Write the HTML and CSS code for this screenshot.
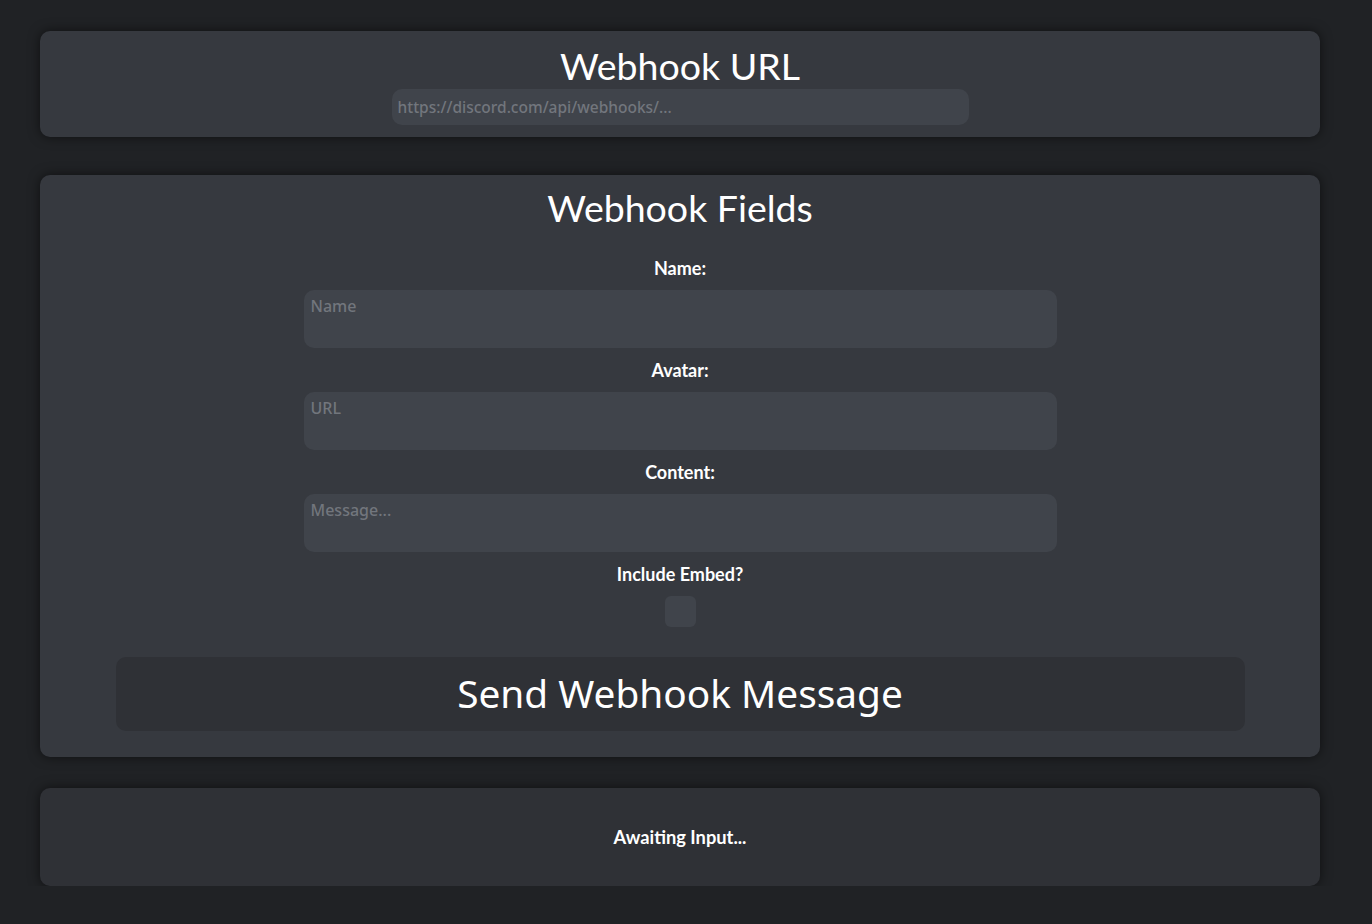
FILE: index.html
```html
<!DOCTYPE html>
<html>
<head>
<meta charset="utf-8">
<link rel="stylesheet" href="styles.css">
</head>
<body>
<div class="page">
  <section class="card card-url">
    <h1 class="title">Webhook URL</h1>
    <input class="url-input" type="text" placeholder="https://discord.com/api/webhooks/...">
  </section>
  <section class="card card-fields">
    <h1 class="title">Webhook Fields</h1>
    <label class="label">Name:</label>
    <textarea class="field" placeholder="Name"></textarea>
    <label class="label">Avatar:</label>
    <textarea class="field" placeholder="URL"></textarea>
    <label class="label">Content:</label>
    <textarea class="field" placeholder="Message..."></textarea>
    <label class="label">Include Embed?</label>
    <span class="checkbox"></span>
    <button class="send">Send Webhook Message</button>
  </section>
  <section class="card card-status">
    <p class="status">Awaiting Input...</p>
  </section>
</div>
</body>
</html>
```
FILE: styles.css
```css
html, body {
  margin: 0;
  padding: 0;
  background: #202225;
}
body {
  font-family: "Lato", "Noto Sans", sans-serif;
  color: #ffffff;
}
.page {
  display: flex;
  flex-direction: column;
  padding: 31px 0 0 40px;
  width: 1280px;
}
.card {
  background: #36393f;
  border-radius: 10px;
  box-shadow: 0 0 12px rgba(0, 0, 0, 0.55);
  display: flex;
  flex-direction: column;
  align-items: center;
  box-sizing: border-box;
}
.title {
  margin: 0;
  font-weight: 400;
  font-size: 37.5px;
  line-height: 46px;
  color: #ffffff;
}
.card-url {
  height: 106px;
  padding-top: 12px;
}
.url-input {
  box-sizing: border-box;
  width: 577px;
  height: 36px;
  margin-top: 0;
  border: none;
  outline: none;
  border-radius: 10px;
  background: #40444b;
  padding: 0 6px;
  font-family: "Noto Sans", sans-serif;
  font-size: 15.5px;
  color: #dcddde;
}
.url-input::placeholder, .field::placeholder {
  color: #72767d;
  font-weight: 500;
}
.card-fields {
  margin-top: 38px;
  height: 582px;
  padding-top: 10px;
}
.card-fields .title {
  margin-bottom: 27px;
}
.label {
  font-weight: 700;
  font-size: 18px;
  line-height: 22px;
  color: #ffffff;
  margin-top: -1px;
  margin-bottom: 1px;
}
.field {
  box-sizing: border-box;
  display: block;
  width: 753px;
  height: 58px;
  margin: 10px 0 12px;
  border: none;
  outline: none;
  resize: none;
  border-radius: 10px;
  background: #40444b;
  padding: 6px 7px;
  font-family: "Noto Sans", sans-serif;
  font-size: 16px;
  line-height: 20px;
  color: #dcddde;
}
.checkbox {
  display: block;
  width: 31px;
  height: 31px;
  margin-top: 10px;
  border-radius: 6px;
  background: #40444b;
}
.send {
  margin-top: 30px;
  width: 1129px;
  height: 74px;
  border: none;
  border-radius: 10px;
  background: #2f3136;
  color: #ffffff;
  font-family: "Noto Sans", sans-serif;
  font-size: 38.8px;
  line-height: 46px;
  font-weight: 400;
  padding: 0 0 2px;
}
.card-status {
  margin-top: 31px;
  height: 98px;
  background: #2f3136;
  justify-content: center;
}
.status {
  margin: 0;
  font-weight: 700;
  font-size: 18.3px;
  line-height: 22px;
}
```
